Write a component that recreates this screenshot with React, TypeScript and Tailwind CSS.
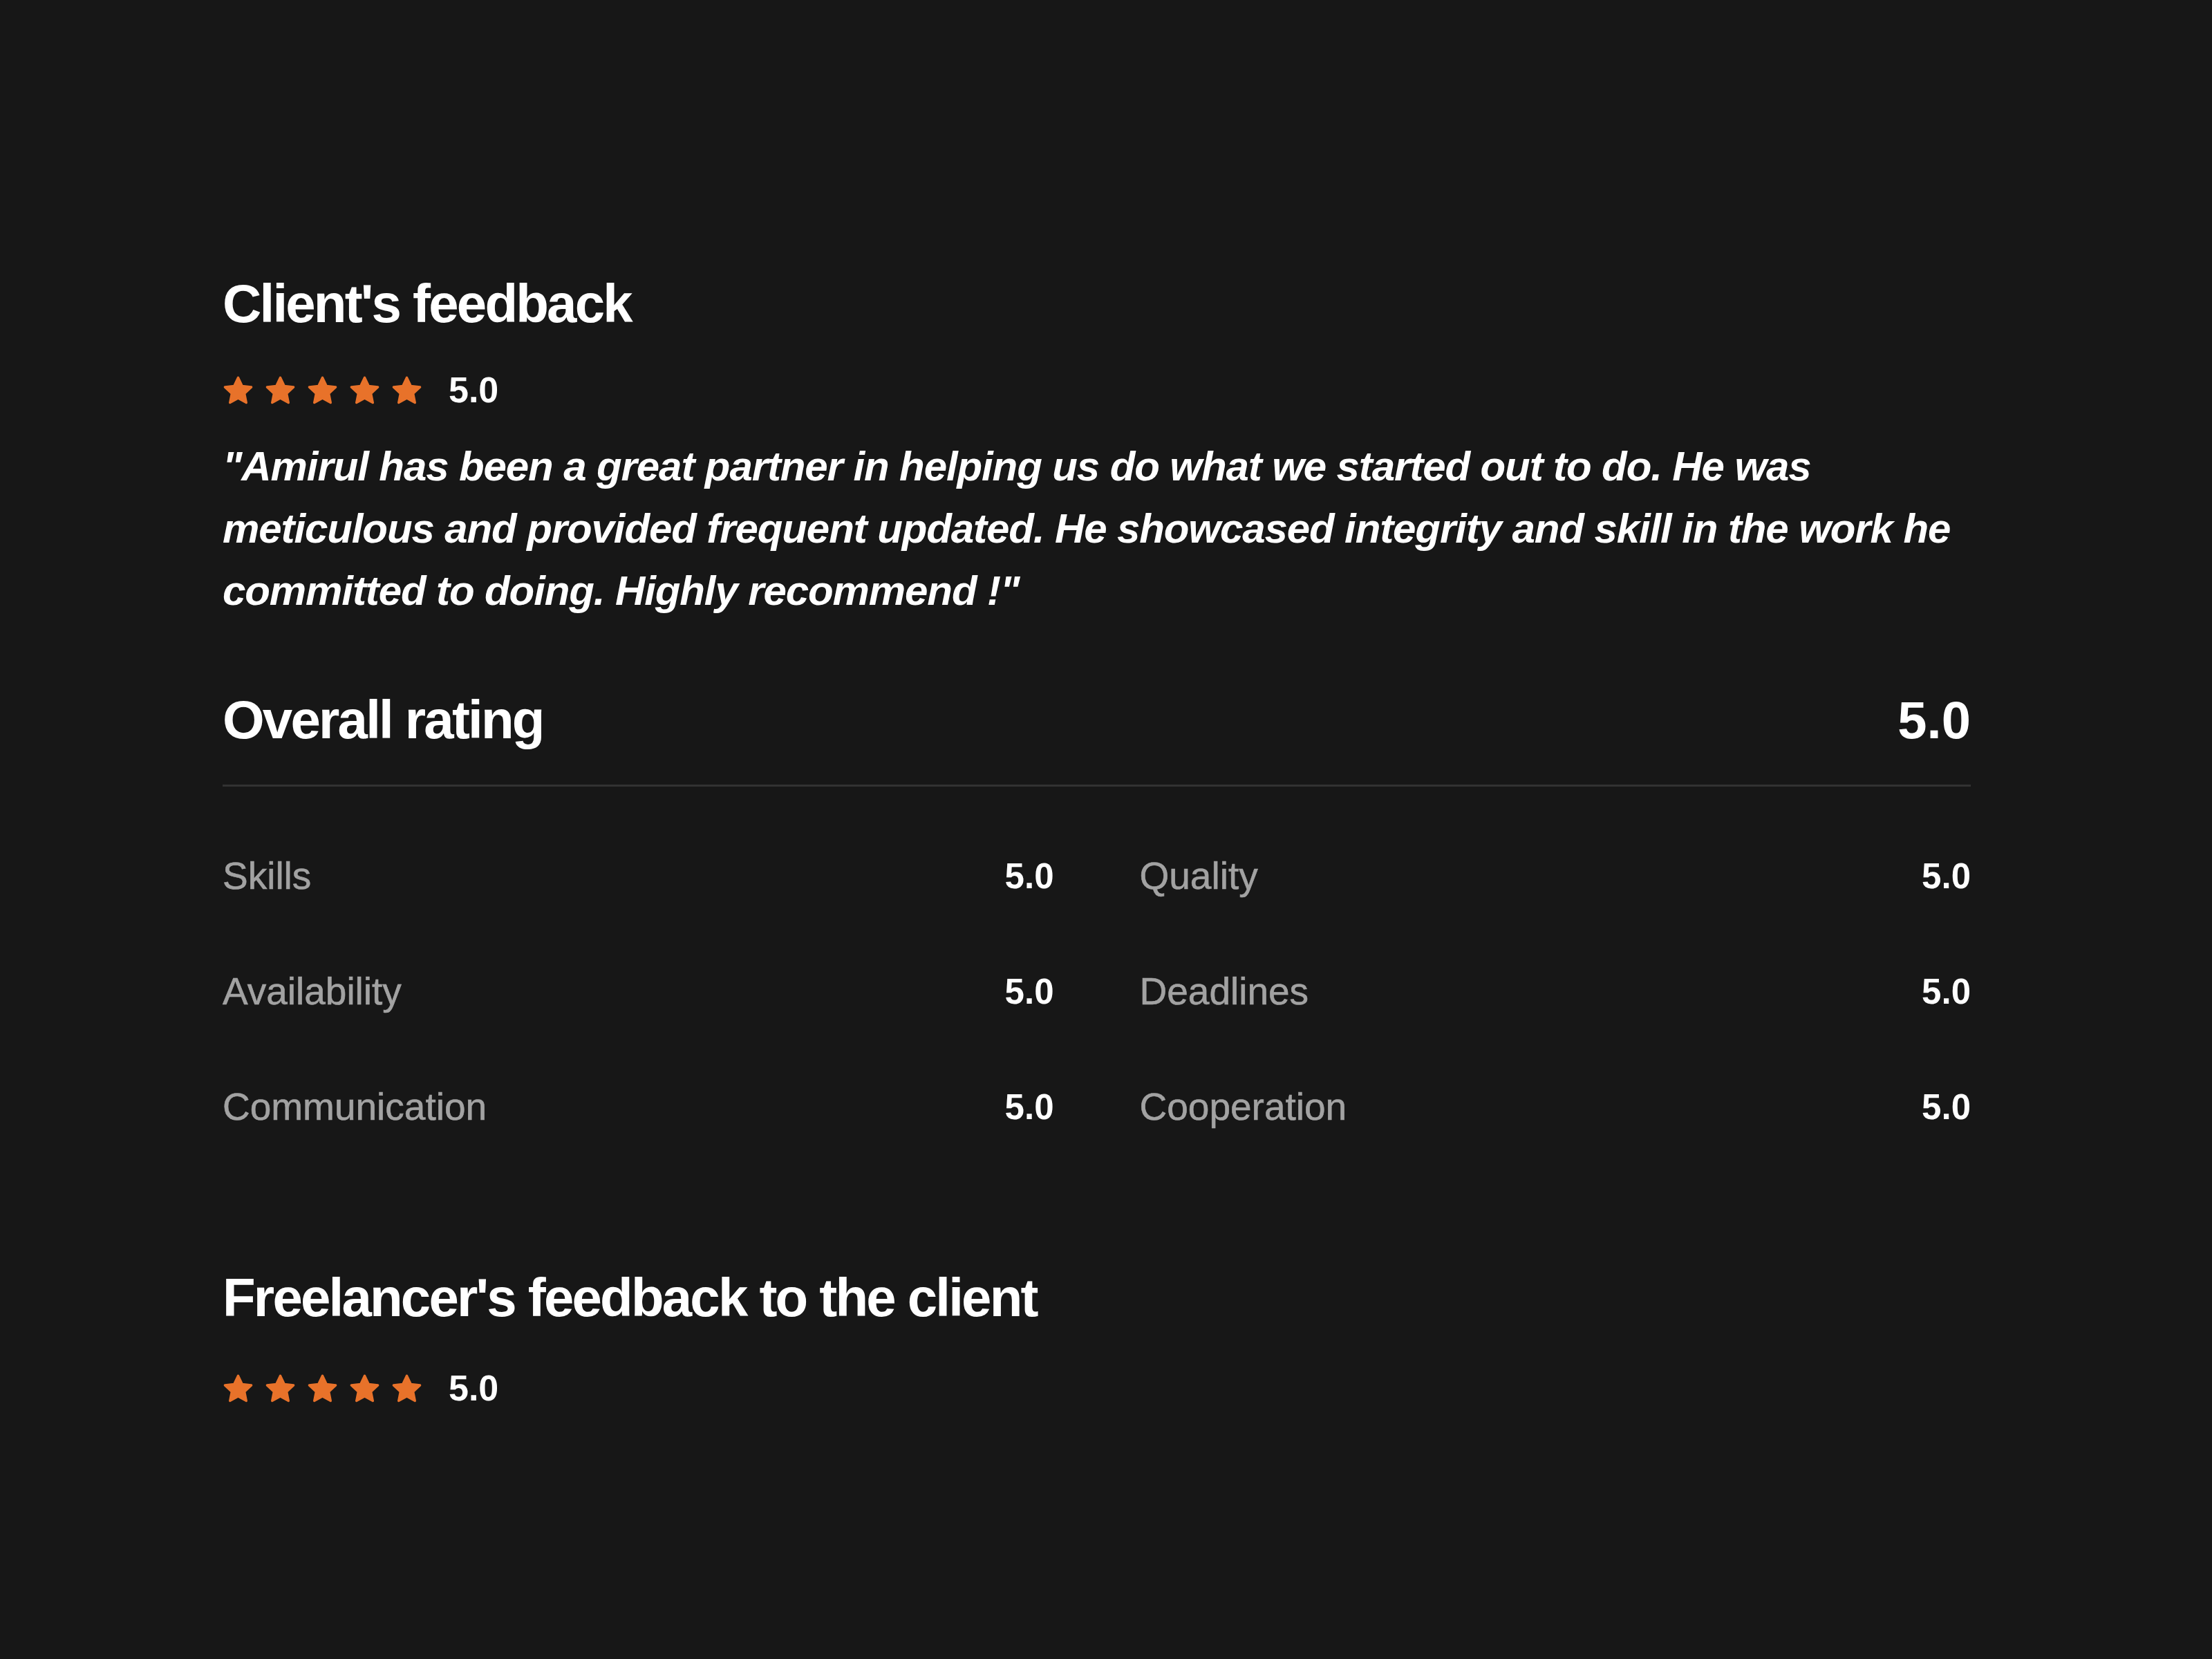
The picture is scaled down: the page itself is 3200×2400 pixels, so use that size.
const Star = () => (
  <svg width="45" height="45" viewBox="0 0 24 24" className="shrink-0 overflow-visible">
    <polygon
      points="12,2.3 15.1,8.8 22.2,9.6 16.9,14.6 18.3,21.6 12,18.2 5.7,21.6 7.1,14.6 1.8,9.6 8.9,8.8"
      fill="#e8722a"
      stroke="#e8722a"
      strokeWidth="1.8"
      strokeLinejoin="round"
    />
  </svg>
);

const StarRating = ({ value }: { value: string }) => (
  <div className="flex items-center">
    <div className="flex items-center gap-[16px]">
      {[0, 1, 2, 3, 4].map((i) => (
        <Star key={i} />
      ))}
    </div>
    <span className="ml-[38px] text-[52px] font-bold leading-none text-white">{value}</span>
  </div>
);

const scores = [
  { label: 'Skills', value: '5.0' },
  { label: 'Quality', value: '5.0' },
  { label: 'Availability', value: '5.0' },
  { label: 'Deadlines', value: '5.0' },
  { label: 'Communication', value: '5.0' },
  { label: 'Cooperation', value: '5.0' },
];

export default function App() {
  return (
    <div className="min-h-screen w-full bg-[#171717] font-['Liberation_Sans',Arial,sans-serif] text-white">
      <div className="ml-[322px] w-[2529px] pt-[400px]">
        <h2 className="text-[78px] font-bold leading-none tracking-[-2.8px]">Client's feedback</h2>

        <div className="mt-[60px]">
          <StarRating value="5.0" />
        </div>

        <p className="mt-[40px] text-[60px] font-bold italic leading-[90px] tracking-[-1.1px]">
          {'"Amirul has been a great partner in helping us do what we started out to do. He was meticulous and provided frequent updated. He showcased integrity and skill in the work he committed to doing. Highly recommend !"'}
        </p>

        <div className="mt-[102px] flex items-baseline justify-between border-b-[3px] border-[#323232] pb-[55px]">
          <h2 className="text-[78px] font-bold leading-none tracking-[-2.8px]">Overall rating</h2>
          <span className="text-[76px] font-bold leading-none">5.0</span>
        </div>

        <div className="mt-[99px] grid grid-cols-2 gap-x-[124px] gap-y-[107px]">
          {scores.map((s) => (
            <div key={s.label} className="flex h-[60px] items-center justify-between">
              <span className="text-[55px] leading-none text-[#a2a2a2] [-webkit-text-stroke:0.6px_#a2a2a2]">
                {s.label}
              </span>
              <span className="text-[51px] font-bold leading-none">{s.value}</span>
            </div>
          ))}
        </div>

        <h2 className="mt-[207px] text-[78px] font-bold leading-none tracking-[-2.8px]">
          Freelancer's feedback to the client
        </h2>

        <div className="mt-[66px]">
          <StarRating value="5.0" />
        </div>
      </div>
    </div>
  );
}
